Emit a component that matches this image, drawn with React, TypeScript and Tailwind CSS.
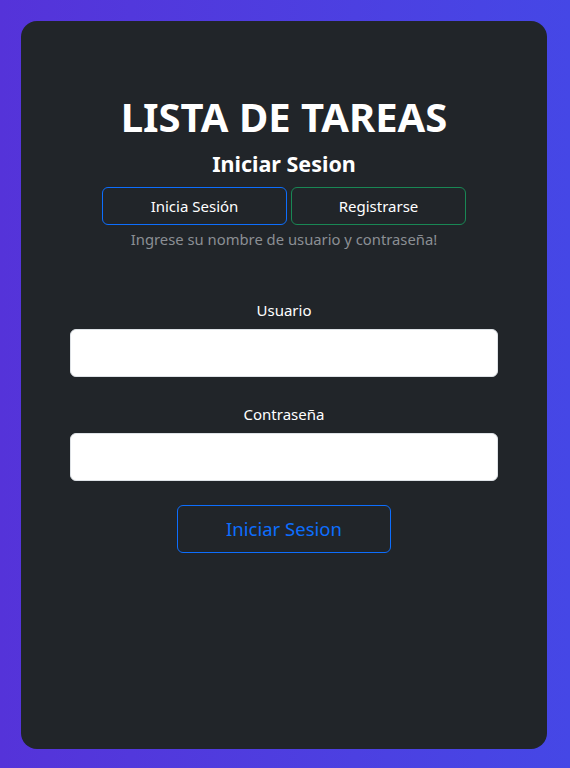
export default function App() {
  return (
    <div className="min-h-screen w-full bg-gradient-to-r from-[#5533d9] to-[#4547e6] p-[21px] font-['Noto_Sans',sans-serif]">
      <div className="flex h-[728px] w-[526px] flex-col items-center rounded-2xl bg-[#212529] px-[49px] pt-[72px] text-white">
        <h1 className="text-[40px] font-bold leading-[48px]">LISTA DE TAREAS</h1>
        <h2 className="mt-[8px] text-[21.5px] font-bold leading-[29px]">Iniciar Sesion</h2>
        <div className="mt-[9px] flex gap-1">
          <button className="h-[38px] w-[185px] rounded-md border border-[#0d6efd] text-[15px]">Inicia Sesión</button>
          <button className="h-[38px] w-[175px] rounded-md border border-[#198754] text-[15px]">Registrarse</button>
        </div>
        <p className="mt-[2px] text-[14.8px] leading-6 text-[#8b8f94]">Ingrese su nombre de usuario y contraseña!</p>

        <label className="mt-[47px] text-[15px] leading-6">Usuario</label>
        <input className="mt-[7px] h-[48px] w-full rounded-md border border-[#dee2e6] bg-white" />

        <label className="mt-[25px] text-[15px] leading-6">Contraseña</label>
        <input type="password" className="mt-[7px] h-[48px] w-full rounded-md border border-[#dee2e6] bg-white" />

        <button className="mt-[24px] h-[48px] w-[214px] rounded-md border border-[#0d6efd] text-[18.5px] text-[#0d6efd]">
          Iniciar Sesion
        </button>
      </div>
    </div>
  )
}
